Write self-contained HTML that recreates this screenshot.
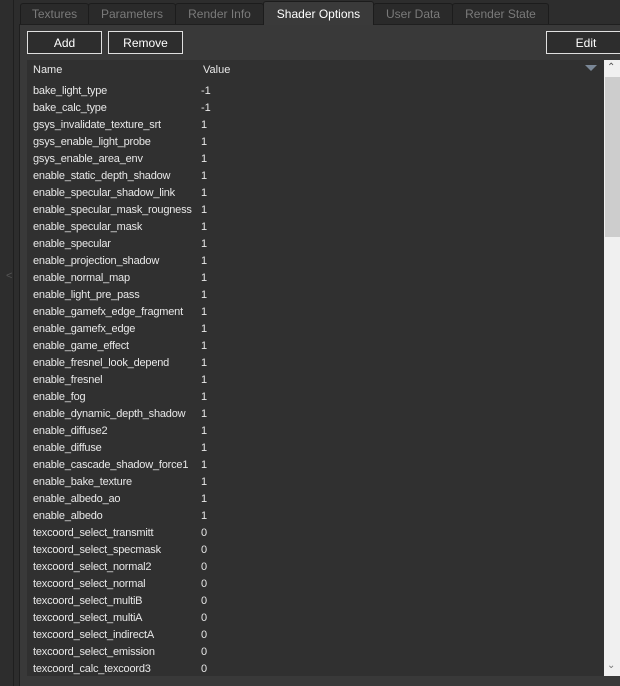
<!DOCTYPE html>
<html><head><meta charset="utf-8"><style>
*{margin:0;padding:0;box-sizing:border-box}
body{width:620px;height:686px;background:#2d2d2d;position:relative;overflow:hidden;font-family:"Liberation Sans",Arial,sans-serif;font-size:11px;color:#e8e8e8}
.abs{position:absolute}
.tab{position:absolute;top:3px;height:22px;background:#2a2a2a;border:1px solid #1c1c1c;border-bottom:none;border-radius:3px 3px 0 0;color:#7a7a7a;font-size:12px;text-align:center;line-height:20px}
.tab.act{top:1px;height:24px;background:#3a3a3a;color:#fff;line-height:24px}
.btn{position:absolute;top:31px;height:23px;border:1px solid #e0e0e0;background:#2d2d2d;color:#fff;font-size:12px;text-align:center;line-height:23px}
.row{position:absolute;left:33px;height:17px;line-height:17px;white-space:nowrap;letter-spacing:-0.2px}
.val{position:absolute;left:201px;height:17px;line-height:17px}
</style></head><body>
<div class="abs" style="left:13px;top:0;width:1px;height:686px;background:#1f1f1f"></div>
<div class="abs" style="left:20px;top:24px;width:600px;height:662px;background:#393939"></div>
<div class="abs" style="left:19px;top:24px;width:1px;height:662px;background:#1f1f1f"></div>
<div class="abs" style="left:6px;top:270px;color:#555;font-size:11px">&lt;</div>
<div class="tab" style="left:20px;width:69px">Textures</div>
<div class="tab" style="left:88px;width:88px">Parameters</div>
<div class="tab" style="left:175px;width:89px">Render Info</div>
<div class="tab act" style="left:263px;width:111px">Shader Options</div>
<div class="tab" style="left:373px;width:80px">User Data</div>
<div class="tab" style="left:452px;width:97px">Render State</div>
<div class="abs" style="left:20px;top:24px;width:243px;height:1px;background:#1f1f1f"></div>
<div class="abs" style="left:374px;top:24px;width:246px;height:1px;background:#1f1f1f"></div>
<div class="btn" style="left:27px;width:75px">Add</div>
<div class="btn" style="left:108px;width:75px">Remove</div>
<div class="btn" style="left:546px;width:80px">Edit</div>
<div class="abs" style="left:27px;top:60px;width:577px;height:616px;background:#303030"></div>
<div class="abs" style="left:33px;top:63px;line-height:14px">Name</div>
<div class="abs" style="left:203px;top:63px;line-height:14px">Value</div>
<div class="abs" style="left:585px;top:65px;width:0;height:0;border-left:6px solid transparent;border-right:6px solid transparent;border-top:6px solid #7a8796"></div>
<div class="abs" style="left:604px;top:60px;width:16px;height:616px;background:#f0f0f0"></div>
<div class="abs" style="left:605px;top:77px;width:15px;height:160px;background:#cdcdcd"></div>
<div class="abs" style="left:607px;top:62px;color:#555;font-size:10px">&#8963;</div>
<div class="abs" style="left:607px;top:660px;color:#777;font-size:10px">&#8964;</div>
<div id="rows"></div>
<script>
var d=[["bake_light_type","-1"],["bake_calc_type","-1"],["gsys_invalidate_texture_srt","1"],["gsys_enable_light_probe","1"],["gsys_enable_area_env","1"],["enable_static_depth_shadow","1"],["enable_specular_shadow_link","1"],["enable_specular_mask_rougness","1"],["enable_specular_mask","1"],["enable_specular","1"],["enable_projection_shadow","1"],["enable_normal_map","1"],["enable_light_pre_pass","1"],["enable_gamefx_edge_fragment","1"],["enable_gamefx_edge","1"],["enable_game_effect","1"],["enable_fresnel_look_depend","1"],["enable_fresnel","1"],["enable_fog","1"],["enable_dynamic_depth_shadow","1"],["enable_diffuse2","1"],["enable_diffuse","1"],["enable_cascade_shadow_force1","1"],["enable_bake_texture","1"],["enable_albedo_ao","1"],["enable_albedo","1"],["texcoord_select_transmitt","0"],["texcoord_select_specmask","0"],["texcoord_select_normal2","0"],["texcoord_select_normal","0"],["texcoord_select_multiB","0"],["texcoord_select_multiA","0"],["texcoord_select_indirectA","0"],["texcoord_select_emission","0"],["texcoord_calc_texcoord3","0"]];
var h="";for(var i=0;i<d.length;i++){var y=83+i*17;h+='<div class="row" style="top:'+y+'px">'+d[i][0]+'</div><div class="val" style="top:'+y+'px">'+d[i][1]+'</div>';}
document.getElementById("rows").innerHTML=h;
</script>
</body></html>
